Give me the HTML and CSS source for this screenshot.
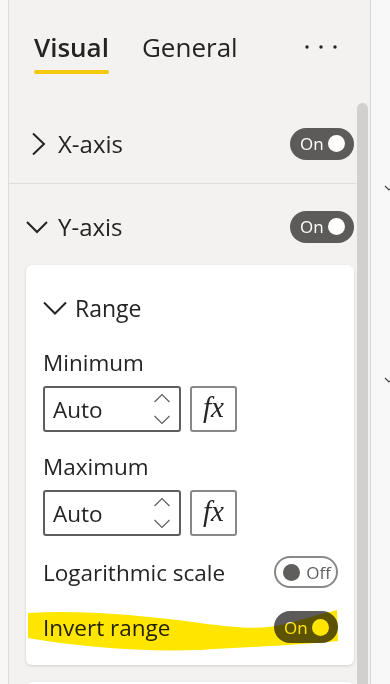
FILE: index.html
```html
<!DOCTYPE html>
<html lang="en">
<head>
    <meta charset="UTF-8">
    <meta name="viewport" content="width=device-width, initial-scale=1.0">
    <title>Format pane</title>
    <link rel="stylesheet" href="styles.css">
</head>
<body>
    <div class="edge"></div>
    <div class="panel">
        <div class="tabs">
            <div class="tab active">Visual<span class="underline"></span></div>
            <div class="tab">General</div>
            <svg class="more" width="32" height="6" viewBox="0 0 32 6">
                <circle cx="2" cy="3" r="1.7" fill="#252423"/>
                <circle cx="16" cy="3" r="1.7" fill="#252423"/>
                <circle cx="30" cy="3" r="1.7" fill="#252423"/>
            </svg>
        </div>
        <div class="pane-body">
            <div class="content">
                <div class="section divider">
                    <svg class="chev" width="22" height="24" viewBox="0 0 22 24">
                        <path d="M7 1.5 L18 12 L7 22.5" fill="none" stroke="#252423" stroke-width="2"/>
                    </svg>
                    <span class="section-title">X-axis</span>
                    <div class="toggle on"><span>On</span><i class="knob"></i></div>
                </div>
                <div class="section open">
                    <svg class="chev" width="22" height="24" viewBox="0 0 22 24">
                        <path d="M1 7 L11 17 L21 7" fill="none" stroke="#252423" stroke-width="2"/>
                    </svg>
                    <span class="section-title">Y-axis</span>
                    <div class="toggle on"><span>On</span><i class="knob"></i></div>
                </div>

                <div class="card">
                    <div class="card-head">
                        <svg width="24" height="24" viewBox="0 0 24 24">
                            <path d="M1 6.5 L12 17.5 L23 6.5" fill="none" stroke="#252423" stroke-width="2"/>
                        </svg>
                        <span class="card-title">Range</span>
                    </div>

                    <div class="label">Minimum</div>
                    <div class="field-row">
                        <div class="spin">
                            <span>Auto</span>
                            <svg width="18" height="32" viewBox="0 0 18 32">
                                <path d="M1.5 9 L9 1.5 L16.5 9" fill="none" stroke="#605e5c" stroke-width="1.2"/>
                                <path d="M1.5 23 L9 30.5 L16.5 23" fill="none" stroke="#605e5c" stroke-width="1.2"/>
                            </svg>
                        </div>
                        <div class="fx">fx</div>
                    </div>

                    <div class="label">Maximum</div>
                    <div class="field-row">
                        <div class="spin">
                            <span>Auto</span>
                            <svg width="18" height="32" viewBox="0 0 18 32">
                                <path d="M1.5 9 L9 1.5 L16.5 9" fill="none" stroke="#605e5c" stroke-width="1.2"/>
                                <path d="M1.5 23 L9 30.5 L16.5 23" fill="none" stroke="#605e5c" stroke-width="1.2"/>
                            </svg>
                        </div>
                        <div class="fx">fx</div>
                    </div>

                    <div class="option log">
                        <span>Logarithmic scale</span>
                        <div class="toggle off"><i class="knob"></i><span>Off</span></div>
                    </div>
                    <div class="option invert">
                        <span>Invert range</span>
                        <div class="toggle on"><span>On</span><i class="knob"></i></div>
                    </div>

                    <!-- highlighter stroke drawn over the row -->
                    <svg class="marker" width="328" height="400" viewBox="0 0 328 400">
                        <path d="M2 348 C54 345 114 350 174 358 S244 363 274 355 L311 345 L312 376 C274 380 224 382 174 385 C114 387 54 382 2 373 Z" fill="#ffe600"/>
                    </svg>
                </div>
                <div class="card next"></div>
            </div>
            <div class="scrollbar"></div>
        </div>
    </div>
    <div class="side">
        <svg width="10" height="6" viewBox="0 0 10 6"><path d="M1 1 L5 5 L9 1" fill="none" stroke="#444" stroke-width="1.2"/></svg>
        <svg width="10" height="6" viewBox="0 0 10 6"><path d="M1 1 L5 5 L9 1" fill="none" stroke="#444" stroke-width="1.2"/></svg>
    </div>
</body>
</html>
```

FILE: styles.css
```css
body {
    margin: 0;
    height: 684px;
    overflow: hidden;
    display: flex;
    background-color: #f8f8f8;
    color: #252423;
    font-family: "Open Sans", "Noto Sans", sans-serif;
}

.edge {
    width: 8px;
    flex-shrink: 0;
    background-color: #f7f7f7;
}

.panel {
    width: 361px;
    flex-shrink: 0;
    border-left: 1px solid #dcdcdc;
    border-right: 1px solid #d6d6d6;
    background-color: #f3f2f1;
    display: flex;
    flex-direction: column;
}

.tabs {
    height: 100px;
    flex-shrink: 0;
    box-sizing: border-box;
    padding: 30px 0 0 25px;
    display: flex;
    align-items: flex-start;
}

.tab {
    font-size: 26px;
    line-height: 34px;
    margin-right: 33px;
    display: flex;
    flex-direction: column;
}

.tab.active {
    font-weight: 600;
}

.underline {
    height: 4px;
    margin-top: 6px;
    border-radius: 2px;
    background-color: #f2c811;
}

.more {
    margin: 14px 0 0 34px;
}

.pane-body {
    flex: 1;
    min-height: 0;
    display: flex;
    overflow: hidden;
}

.content {
    flex: 1;
    padding-top: 4px;
}

.scrollbar {
    width: 11px;
    flex-shrink: 0;
    margin: 3px 2px 0 1px;
    border-radius: 6px 6px 0 0;
    background-color: #d1d0cf;
}

.section {
    display: flex;
    align-items: center;
    padding: 0 2px 0 17px;
    height: 79px;
}

.section.divider {
    border-bottom: 1px solid #dcdcdc;
}

.section.open {
    height: 81px;
    box-sizing: border-box;
    padding-top: 4px;
}

.section-title {
    font-size: 24px;
    margin-left: 10px;
}

.toggle {
    margin-left: auto;
    width: 64px;
    height: 32px;
    flex-shrink: 0;
    box-sizing: border-box;
    border-radius: 16px;
    display: flex;
    align-items: center;
    font-size: 17px;
}

.toggle.on {
    background-color: #5c5b5a;
    color: white;
    padding: 0 9px 0 10px;
    justify-content: space-between;
}

.toggle.off {
    background-color: white;
    border: 2px solid #8a8886;
    color: #605e5c;
    padding: 0 5px 0 7px;
    justify-content: space-between;
}

.knob {
    width: 17px;
    height: 17px;
    border-radius: 50%;
    background-color: white;
}

.toggle.off .knob {
    background-color: #605e5c;
}

.card {
    position: relative;
    margin: 0 2px 0 17px;
    padding: 0 16px 22px 17px;
    background-color: white;
    border-radius: 6px;
    box-shadow: 0 1px 3px rgba(0, 0, 0, 0.15);
}

.card.next {
    margin-top: 17px;
    height: 20px;
    padding: 0;
    border-radius: 6px 6px 0 0;
}

.card-head {
    height: 85px;
    display: flex;
    align-items: center;
}

.card-title {
    font-size: 23px;
    font-weight: 500;
    margin-left: 8px;
}

.label {
    font-size: 22.5px;
    line-height: 26px;
}

.field-row {
    display: flex;
    margin: 10px 0 22px;
}

.spin {
    width: 138px;
    height: 46px;
    box-sizing: border-box;
    border: 2px solid #605e5c;
    border-radius: 3px;
    padding: 0 8px 0 8px;
    display: flex;
    align-items: center;
    justify-content: space-between;
    font-size: 22.5px;
}

.fx {
    width: 47px;
    height: 46px;
    box-sizing: border-box;
    margin-left: 9px;
    border: 2px solid #8a8886;
    border-radius: 3px;
    display: flex;
    align-items: center;
    justify-content: center;
    font-family: "Liberation Serif", serif;
    font-style: italic;
    font-size: 29px;
    padding-bottom: 3px;
}

.option {
    display: flex;
    align-items: center;
    font-size: 22.5px;
}

.option.log {
    margin-top: -2px;
}

.option.invert {
    margin-top: 23px;
}

.marker {
    position: absolute;
    left: 0;
    top: 0;
    mix-blend-mode: multiply;
    pointer-events: none;
}

.side {
    flex: 1;
    display: flex;
    flex-direction: column;
    padding: 185px 0 0 13px;
    gap: 186px;
    overflow: hidden;
}
```
